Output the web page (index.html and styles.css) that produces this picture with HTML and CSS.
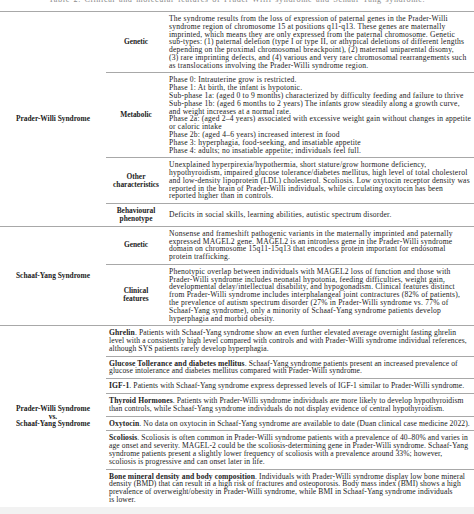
FILE: index.html
```html
<!DOCTYPE html>
<html lang="en">
<head>
<meta charset="utf-8">
<title>Prader-Willi vs Schaaf-Yang</title>
<link rel="stylesheet" href="styles.css">
</head>
<body>
<div class="caption"><span>Table 2. Clinical and molecular features of Prader-Willi syndrome and Schaaf-Yang syndrome.</span></div>
<table class="tbl">
<colgroup><col class="k1"><col class="k2"><col class="k3"></colgroup>
<tr>
<td class="c1" rowspan="4">Prader-Willi Syndrome</td>
<td class="c2">Genetic</td>
<td class="c3">The syndrome results from the loss of expression of paternal genes in the Prader-Willi<br>syndrome region of chromosome 15 at positions q11-q13. These genes are maternally<br>imprinted, which means they are only expressed from the paternal chromosome. Genetic<br>sub-types: (1) paternal deletion (type I or type II, or athypical deletions of different lengths<br>depending on the proximal chromosomal breackpoint), (2) maternal uniparental disomy,<br>(3) rare imprinting defects, and (4) various and very rare chromosomal rearrangements such<br>as translocations involving the Prader-Willi syndrome region.</td>
</tr>
<tr>
<td class="c2">Metabolic</td>
<td class="c3">Phase 0: Intrauterine grow is restricted.<br>Phase 1: At birth, the infant is hypotonic.<br>Sub-phase 1a: (aged 0 to 9 months) characterized by difficulty feeding and failure to thrive<br>Sub-phase 1b: (aged 6 months to 2 years) The infants grow steadily along a growth curve,<br>and weight increases at a normal rate.<br>Phase 2a: (aged 2–4 years) associated with excessive weight gain without changes in appetite<br>or caloric intake<br>Phase 2b: (aged 4–6 years) increased interest in food<br>Phase 3: hyperphagia, food-seeking, and insatiable appetite<br>Phase 4: adults; no insatiable appetite; individuals feel full.</td>
</tr>
<tr>
<td class="c2">Other<br>characteristics</td>
<td class="c3">Unexplained hyperpirexia/hypothermia, short stature/grow hormone deficiency,<br>hypothyroidism, impaired glucose tolerance/diabetes mellitus, high level of total cholesterol<br>and low-density lipoprotein (LDL) cholesterol. Scoliosis. Low oxytocin receptor density was<br>reported in the brain of Prader-Willi individuals, while circulating oxytocin has been<br>reported higher than in controls.</td>
</tr>
<tr>
<td class="c2">Behavioural<br>phenotype</td>
<td class="c3">Deficits in social skills, learning abilities, autistic spectrum disorder.</td>
</tr>
<tr>
<td class="c1" rowspan="2">Schaaf-Yang Syndrome</td>
<td class="c2">Genetic</td>
<td class="c3">Nonsense and frameshift pathogenic variants in the maternally imprinted and paternally<br>expressed MAGEL2 gene. MAGEL2 is an intronless gene in the Prader-Willi syndrome<br>domain on chromosome 15q11-15q13 that encodes a protein important for endosomal<br>protein trafficking.</td>
</tr>
<tr>
<td class="c2">Clinical<br>features</td>
<td class="c3">Phenotypic overlap between individuals with MAGEL2 loss of function and those with<br>Prader-Willi syndrome includes neonatal hypotonia, feeding difficulties, weight gain,<br>developmental delay/intellectual disability, and hypogonadism. Clinical features distinct<br>from Prader-Willi syndrome includes interphalangeal joint contractures (82% of patients),<br>the prevalence of autism spectrum disorder (27% in Prader-Willi syndrome vs. 77% of<br>Schaaf-Yang syndrome), only a minority of Schaaf-Yang syndrome patients develop<br>hyperphagia and morbid obesity.</td>
</tr>
<tr>
<td class="c1" rowspan="7">Prader-Willi Syndrome<br>vs.<br>Schaaf-Yang Syndrome</td>
<td class="wide" colspan="2"><b>Ghrelin</b>. Patients with Schaaf-Yang syndrome show an even further elevated average overnight fasting ghrelin<br>level with a consistently high level compared with controls and with Prader-Willi syndrome individual references,<br>although SYS patients rarely develop hyperphagia.</td>
</tr>
<tr>
<td class="wide" colspan="2"><b>Glucose Tollerance and diabetes mellitus</b>. Schaaf-Yang syndrome patients present an increased prevalence of<br>glucose intolerance and diabetes mellitus compared with Prader-Willi syndrome.</td>
</tr>
<tr>
<td class="wide" colspan="2"><b>IGF-1</b>. Patients with Schaaf-Yang syndrome express depressed levels of IGF-1 similar to Prader-Willi syndrome.</td>
</tr>
<tr>
<td class="wide" colspan="2"><b>Thyroid Hormones</b>. Patients with Prader-Willi syndrome individuals are more likely to develop hypothyroidism<br>than controls, while Schaaf-Yang syndrome individuals do not display evidence of central hypothyroidism.</td>
</tr>
<tr>
<td class="wide" colspan="2"><b>Oxytocin</b>. No data on oxytocin in Schaaf-Yang syndrome are available to date (Duan clinical case medicine 2022).</td>
</tr>
<tr>
<td class="wide" colspan="2"><b>Scoliosis</b>. Scoliosis is often common in Prader-Willi syndrome patients with a prevalence of 40–80% and varies in<br>age onset and severity. MAGEL-2 could be the scoliosis-determining gene in Prader-Willi syndrome. Schaaf-Yang<br>syndrome patients present a slightly lower frequency of scoliosis with a prevalence around 33%; however,<br>scoliosis is progressive and can onset later in life.</td>
</tr>
<tr>
<td class="wide" colspan="2"><b>Bone mineral density and body composition</b>. Individuals with Prader-Willi syndrome display low bone mineral<br>density (BMD) that can result in a high risk of fractures and osteoporosis. Body mass index (BMI) shows a high<br>prevalence of overweight/obesity in Prader-Willi syndrome, while BMI in Schaaf-Yang syndrome individuals<br>is lower.</td>
</tr>
</table>
<div class="band"></div>
</body>
</html>
```
FILE: styles.css
```css
html, body {
  margin: 0;
  padding: 0;
  background: #ffffff;
}
body {
  width: 474px;
  height: 514px;
  overflow: hidden;
  font-family: "Liberation Serif", "Times New Roman", serif;
  font-size: 7.6px;
  line-height: 7.78px;
  color: #222222;
}
.caption {
  height: 11px;
  overflow: hidden;
  text-align: center;
  color: #8a8a8a;
}
.caption span {
  display: block;
  margin-top: -4px;
  line-height: 8px;
  font-size: 8.2px;
  letter-spacing: 0.6px;
  word-spacing: 1px;
}
.tbl {
  width: 474px;
  border-collapse: collapse;
  table-layout: fixed;
  border-top: 1.5px solid #555555;
}
.k1 { width: 106px; }
.k2 { width: 60px; }
.tbl td {
  padding: 3px 3px;
  border-top: 1px solid #a8a8a8;
  vertical-align: middle;
}
.c1, .c2 {
  text-align: center;
  font-weight: bold;
  font-size: 7.4px;
}
.c3 {
  padding-left: 11px;
  white-space: nowrap;
  letter-spacing: 0.2px;
}
.wide {
  white-space: nowrap;
  letter-spacing: 0.1px;
}
.wide b {
  font-weight: bold;
}
.band {
  height: 20px;
  background: #f2f2f2;
}
```
